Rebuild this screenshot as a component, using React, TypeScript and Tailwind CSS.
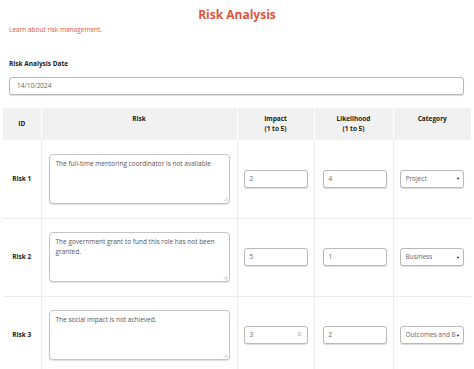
import React from "react";

const rows = [
  { id: "Risk 1", risk: "The full-time mentoring coordinator is not available", impact: "2", like: "4", cat: "Project" },
  { id: "Risk 2", risk: "The government grant to fund this role has not been granted.", impact: "5", like: "1", cat: "Business" },
  { id: "Risk 3", risk: "The social impact is not achieved.", impact: "3", like: "2", cat: "Outcomes and B" },
];

const inputCls =
  "h-[18px] w-[64px] rounded-[3px] border border-[#b9b9b9] bg-white px-[5px] text-[6.5px] text-[#666] shadow-[0_1px_1px_rgba(0,0,0,0.15)] flex items-center";

export default function App() {
  return (
    <div className="w-[474px] h-[369px] overflow-hidden bg-white text-[#333]" style={{ fontFamily: '"Open Sans", "Liberation Sans", sans-serif' }}>
      <div className="pt-[6px] text-center text-[12px] font-bold leading-[18px] text-[#e0553a]">Risk Analysis</div>
      <div className="mt-[1px] pl-[9px] text-[6.5px] leading-[9px] text-[#e0553a]">Learn about risk management.</div>
      <div className="mt-[25px] pl-[9px] text-[6.5px] font-bold leading-[10px] text-[#222]">Risk Analysis Date</div>
      <div className="mt-[8px] pl-[9px] pr-[10px]">
        <div className="h-[18px] rounded-[3px] border border-[#b9b9b9] bg-white px-[7px] text-[6.5px] text-[#666] shadow-[0_1px_1px_rgba(0,0,0,0.15)] flex items-center">14/10/2024</div>
      </div>
      <div className="mt-[13px] pl-[3px] pr-[3px]">
        <table className="w-[468px] border-collapse table-fixed">
          <colgroup>
            <col className="w-[38px]" />
            <col className="w-[196px]" />
            <col className="w-[77px]" />
            <col className="w-[79px]" />
            <col className="w-[78px]" />
          </colgroup>
          <thead>
            <tr className="h-[32px] bg-[#f1f1f1] text-[6.5px] font-bold leading-[10px] text-[#222]">
              <th className="border-r border-white font-bold align-middle">ID</th>
              <th className="border-r border-white font-bold align-middle">Risk<br /><span className="invisible">x</span></th>
              <th className="border-r border-white font-bold align-middle">Impact<br />(1 to 5)</th>
              <th className="border-r border-white font-bold align-middle">Likelihood<br />(1 to 5)</th>
              <th className="font-bold align-middle">Category<br /><span className="invisible">x</span></th>
            </tr>
          </thead>
          <tbody>
            {rows.map((r) => (
              <tr key={r.id} className="h-[78px] border-b border-[#ececec]">
                <td className="border-r border-[#ececec] text-center text-[6.5px] font-bold text-[#222]">{r.id}</td>
                <td className="border-r border-[#ececec] px-[7px] align-middle">
                  <div className="relative h-[50px] rounded-[4px] border border-[#c4c4c4] bg-white px-[6px] pt-[4px] text-[6.5px] leading-[10px] text-[#555] shadow-[0_1px_1px_rgba(0,0,0,0.12)]">
                    {r.risk}
                    <svg className="absolute bottom-[1px] right-[1px]" width="5" height="5" viewBox="0 0 5 5">
                      <path d="M4.5 1 L1 4.5 M4.5 3 L3 4.5" stroke="#999" strokeWidth="0.6" />
                    </svg>
                  </div>
                </td>
                <td className="border-r border-[#ececec] align-middle">
                  <div className="flex pl-[6px]">
                    <div className={inputCls + " justify-between"}>
                      <span>{r.impact}</span>
                      {r.id === "Risk 3" && <span className="text-[5px] text-[#999]">D</span>}
                    </div>
                  </div>
                </td>
                <td className="border-r border-[#ececec] align-middle">
                  <div className="flex pl-[8px]">
                    <div className={inputCls}>{r.like}</div>
                  </div>
                </td>
                <td className="align-middle">
                  <div className="flex pl-[6px]">
                    <div className={inputCls + " justify-between pr-[3px] whitespace-nowrap overflow-hidden"}>
                      <span className="overflow-hidden">{r.cat}</span>
                      <svg width="4" height="3" viewBox="0 0 5 4" className="shrink-0"><path d="M0.5 1 L4.5 1 L2.5 3.5 Z" fill="#333" /></svg>
                    </div>
                  </div>
                </td>
              </tr>
            ))}
          </tbody>
        </table>
      </div>
    </div>
  );
}
